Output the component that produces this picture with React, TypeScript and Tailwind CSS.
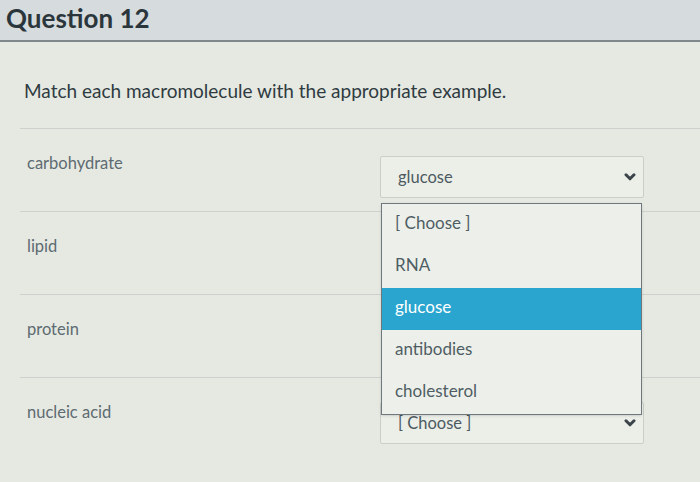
import React from "react";

const rows = ["carbohydrate", "lipid", "protein", "nucleic acid"];
const options = ["[ Choose ]", "RNA", "glucose", "antibodies", "cholesterol"];

function Chevron() {
    return (
        <svg width="12" height="8" viewBox="0 0 12 8" className="shrink-0">
            <path d="M2 1.8 L6 5.8 L10 1.8" fill="none" stroke="#3a4449" strokeWidth="3" strokeLinecap="round" strokeLinejoin="round" />
        </svg>
    );
}

function Select({ value, hidden }: { value: string; hidden?: boolean }) {
    return (
        <div className={`w-[264px] h-[42px] flex items-center justify-between pl-[17px] pr-[7px] bg-[#eceee8] border border-[#c9cec9] rounded-[2px] text-[16.5px] text-[#4c5a61] ${hidden ? "invisible" : ""}`}>
            <span>{value}</span>
            <Chevron />
        </div>
    );
}

export default function App() {
    return (
        <div className="relative w-[700px] h-[482px] overflow-hidden bg-[#e6e9e1] font-['Lato','Noto_Sans',sans-serif]">
            <header className="h-[42px] flex items-end pl-[6px] pb-[9px] bg-[#d6dcde] border-b-2 border-[#80888c]">
                <h1 className="text-[26px] leading-none font-bold text-[#2b363c]">Question 12</h1>
            </header>

            <p className="pl-[24px] pt-[38px] text-[19px] leading-[22px] text-[#2f3b41]">Match each macromolecule with the appropriate example.</p>

            <div className="ml-[20px] mt-[26px] border-t border-[#cdd2cf]">
                {rows.map((label, i) => (
                    <div key={label} className={`flex h-[83px] ${i < rows.length - 1 ? "border-b border-[#cdd2cf]" : ""}`}>
                        <div className="w-[360px] pl-[7px] pt-[24px] text-[16.5px] leading-[20px] text-[#5d6b72]">{label}</div>
                        <div className={i === rows.length - 1 ? "pt-[24px]" : "pt-[27px]"}>
                            {/* rows 2 and 3 sit under the open list */}
                            <Select value={i === 0 ? "glucose" : "[ Choose ]"} hidden={i === 1 || i === 2} />
                        </div>
                    </div>
                ))}
            </div>

            <ul className="absolute left-[381px] top-[203px] w-[261px] bg-[#edf0ea] border border-[#6f787c] shadow-sm">
                {options.map((opt) => (
                    <li
                        key={opt}
                        className={`h-[42px] flex items-center pl-[13px] pb-[5px] text-[17px] ${opt === "glucose" ? "bg-[#29a5cf] text-white" : "text-[#4f5d64]"}`}
                    >
                        {opt}
                    </li>
                ))}
            </ul>
        </div>
    );
}
